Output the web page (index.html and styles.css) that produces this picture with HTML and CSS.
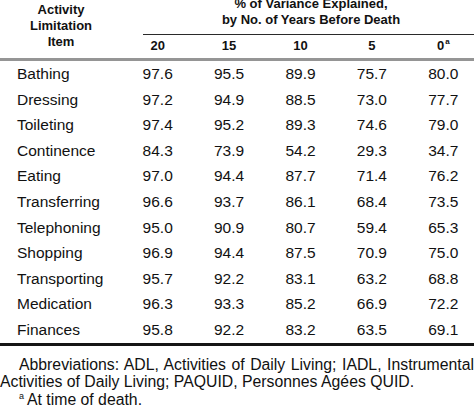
FILE: index.html
```html
<!DOCTYPE html>
<html lang="en">
<head>
<meta charset="utf-8">
<title>Activity Limitation Variance</title>
<link rel="stylesheet" href="styles.css">
</head>
<body>
<div class="page">
<table class="data">
  <colgroup>
    <col class="c-label">
    <col class="c-num"><col class="c-num"><col class="c-num"><col class="c-num"><col class="c-num">
  </colgroup>
  <thead>
    <tr>
      <th class="item" rowspan="2">Activity<br>Limitation<br>Item</th>
      <th class="spanner" colspan="5"><div class="spanner-inner">% of Variance Explained,<br>by No. of Years Before Death</div></th>
    </tr>
    <tr class="years">
      <th>20</th><th>15</th><th>10</th><th>5</th><th>0<sup class="fn">a</sup></th>
    </tr>
  </thead>
  <tbody>
    <tr><td>Bathing</td><td>97.6</td><td>95.5</td><td>89.9</td><td>75.7</td><td>80.0</td></tr>
    <tr><td>Dressing</td><td>97.2</td><td>94.9</td><td>88.5</td><td>73.0</td><td>77.7</td></tr>
    <tr><td>Toileting</td><td>97.4</td><td>95.2</td><td>89.3</td><td>74.6</td><td>79.0</td></tr>
    <tr><td>Continence</td><td>84.3</td><td>73.9</td><td>54.2</td><td>29.3</td><td>34.7</td></tr>
    <tr><td>Eating</td><td>97.0</td><td>94.4</td><td>87.7</td><td>71.4</td><td>76.2</td></tr>
    <tr><td>Transferring</td><td>96.6</td><td>93.7</td><td>86.1</td><td>68.4</td><td>73.5</td></tr>
    <tr><td>Telephoning</td><td>95.0</td><td>90.9</td><td>80.7</td><td>59.4</td><td>65.3</td></tr>
    <tr><td>Shopping</td><td>96.9</td><td>94.4</td><td>87.5</td><td>70.9</td><td>75.0</td></tr>
    <tr><td>Transporting</td><td>95.7</td><td>92.2</td><td>83.1</td><td>63.2</td><td>68.8</td></tr>
    <tr><td>Medication</td><td>96.3</td><td>93.3</td><td>85.2</td><td>66.9</td><td>72.2</td></tr>
    <tr class="last"><td>Finances</td><td>95.8</td><td>92.2</td><td>83.2</td><td>63.5</td><td>69.1</td></tr>
  </tbody>
</table>
<div class="notes">
  <span class="line justified">Abbreviations: ADL, Activities of Daily Living; IADL, Instrumental</span>
  <span class="line">Activities of Daily Living; PAQUID, Personnes Agées QUID.</span>
</div>
<p class="footnote"><sup class="fn">a</sup>At time of death.</p>
</div>
</body>
</html>
```
FILE: styles.css
```css
html, body {
  margin: 0;
  padding: 0;
  background: #ffffff;
}

body {
  width: 474px;
  height: 413px;
  overflow: hidden;
  font-family: "Liberation Sans", Arial, Helvetica, sans-serif;
  color: #111111;
}

.page {
  width: 490px;
  margin-top: -4px;
}

.data {
  border-collapse: separate;
  border-spacing: 0;
  table-layout: fixed;
  width: 479px;
}

.c-label { width: 122px; }
.c-num { width: 71.4px; }

.data th {
  font-size: 13px;
  line-height: 16px;
  font-weight: bold;
  text-align: center;
  padding: 0;
}

.data th.item {
  vertical-align: top;
  padding-top: 6px;
  border-bottom: 3px solid #959595;
}

.data th.spanner {
  padding: 0;
}

.spanner-inner {
  margin-left: 21px;
  padding-bottom: 6px;
  border-bottom: 1px solid #2a2a2a;
  text-align: center;
}

.years th {
  padding: 3px 0 4px;
  border-bottom: 3px solid #959595;
}

.fn {
  font-size: 8px;
  line-height: 0;
  vertical-align: 6px;
  font-weight: normal;
}

.years .fn {
  font-weight: bold;
  margin-left: 1px;
}

.data td {
  font-size: 15.5px;
  line-height: 25.6px;
  padding: 0;
  text-align: center;
  white-space: nowrap;
}

.data td:first-child {
  text-align: left;
  padding-left: 17px;
}

.data tr.last td {
  border-bottom: 3px solid #161616;
}

.notes {
  width: 474px;
  margin-top: 10px;
  font-size: 15.8px;
  line-height: 17.7px;
}

.notes .line {
  display: block;
  white-space: nowrap;
}

.notes .justified {
  white-space: normal;
  text-indent: 19px;
  text-align: justify;
  text-align-last: justify;
}

.footnote {
  margin: 0;
  padding-left: 19px;
  font-size: 15.8px;
  line-height: 17.7px;
  white-space: nowrap;
}

.footnote .fn {
  font-size: 9px;
  margin-right: 3px;
}
```
